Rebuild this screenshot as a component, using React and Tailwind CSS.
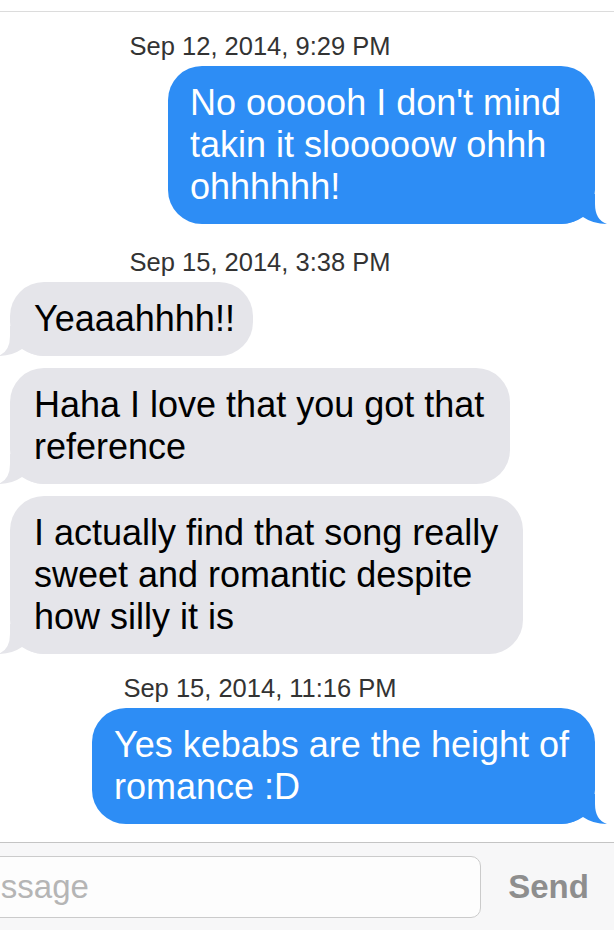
import React from "react";

function Tail({ side, color }) {
  const pos = side === "right" ? "right-[-12px]" : "left-[-12px] -scale-x-100";
  return (
    <svg
      className={`absolute bottom-0 ${pos} w-[52px] h-[30px]`}
      viewBox="0 0 52 30"
      aria-hidden="true"
    >
      <path d="M0 0 H40 V10 Q40 26 52 30 Q38 30 28 23 Q18 30 4 30 H0 Z" fill={color} />
    </svg>
  );
}

function Stamp({ children }) {
  return (
    <div className="w-[520px] text-center text-[25.5px] leading-[30px] text-[#333333] mb-[5px]">
      {children}
    </div>
  );
}

function Sent({ lines, width, className = "" }) {
  return (
    <div className={`flex justify-end pr-[19px] ${className}`}>
      <div
        className={`relative bg-[#2d8df5] text-white rounded-[34px] pl-[22px] py-[16px] text-[36px] leading-[42px] whitespace-nowrap ${width}`}
      >
        <Tail side="right" color="#2d8df5" />
        <div className="relative">
          {lines.map((l, i) => (
            <div key={i}>{l}</div>
          ))}
        </div>
      </div>
    </div>
  );
}

function Recv({ lines, width, className = "" }) {
  return (
    <div className={`flex justify-start pl-[10px] ${className}`}>
      <div
        className={`relative bg-[#e5e5ea] text-black rounded-[34px] pl-[24px] py-[16px] text-[36px] leading-[42px] whitespace-nowrap ${width}`}
      >
        <Tail side="left" color="#e5e5ea" />
        <div className="relative">
          {lines.map((l, i) => (
            <div key={i}>{l}</div>
          ))}
        </div>
      </div>
    </div>
  );
}

export default function App() {
  return (
    <div
      className="w-[614px] h-[930px] bg-white flex flex-col overflow-hidden"
      style={{ fontFamily: '"Liberation Sans", Arial, sans-serif' }}
    >
      <div className="flex-1 overflow-hidden">
        <div className="h-[11px]" />
        <div className="h-px bg-[#dcdcdc]" />
        <div className="pt-[19px]">
          <Stamp>Sep 12, 2014, 9:29 PM</Stamp>
          <Sent
            width="w-[427px]"
            lines={["No oooooh I don't mind", "takin it slooooow ohhh", "ohhhhhh!"]}
          />
          <div className="mt-[23px]">
            <Stamp>Sep 15, 2014, 3:38 PM</Stamp>
          </div>
          <Recv width="w-[243px]" lines={["Yeaaahhhh!!"]} />
          <Recv
            className="mt-[12px]"
            width="w-[500px]"
            lines={["Haha I love that you got that", "reference"]}
          />
          <Recv
            className="mt-[12px]"
            width="w-[513px]"
            lines={["I actually find that song really", "sweet and romantic despite", "how silly it is"]}
          />
          <div className="mt-[19px]">
            <Stamp>Sep 15, 2014, 11:16 PM</Stamp>
          </div>
          <Sent
            width="w-[503px]"
            lines={["Yes kebabs are the height of", "romance :D"]}
          />
        </div>
      </div>
      <div className="h-[88px] shrink-0 border-t border-[#c4c4c4] bg-[#f7f7f8] flex items-start pt-[13px]">
        <div className="ml-[-62px] w-[543px] h-[62px] rounded-[10px] border border-[#cbcbcb] bg-[#fdfdfd] flex items-center pl-[16px] text-[33px] text-[#b5b5b5]">
          Message
        </div>
        <div className="flex-1 h-[62px] flex items-center justify-center pl-[2px] text-[33px] font-bold text-[#8e8e8e]">
          Send
        </div>
      </div>
    </div>
  );
}
